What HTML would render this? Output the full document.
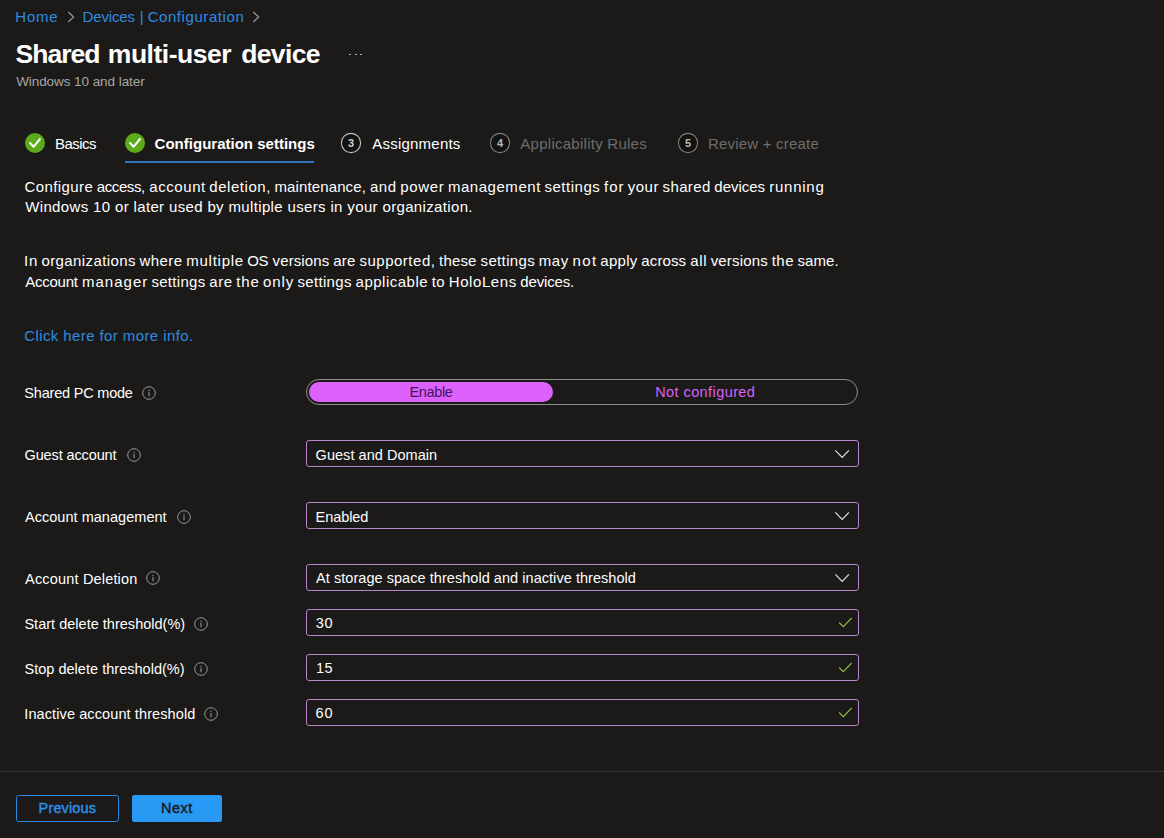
<!DOCTYPE html>
<html><head><meta charset="utf-8"><title>Shared multi-user device</title>
<style>
html,body{margin:0;padding:0;background:#1b1a19;}
body{width:1164px;height:838px;position:relative;overflow:hidden;font-family:"Liberation Sans",sans-serif;}
.t{position:absolute;white-space:nowrap;line-height:1;}
.a{position:absolute;}
.box{position:absolute;left:306px;width:553px;height:27px;box-sizing:border-box;border:1.2px solid #b985c9;border-radius:3px;background:#1b1a19;}
</style></head><body>
<svg class="a" style="left:65.5px;top:9.9px" width="11" height="14" viewBox="0 0 11 14"><polyline points="2.3,2 7.6,7 2.3,12" fill="none" stroke="#969593" stroke-width="1.25"/></svg>
<svg class="a" style="left:250.5px;top:9.9px" width="11" height="14" viewBox="0 0 11 14"><polyline points="2.3,2 7.6,7 2.3,12" fill="none" stroke="#969593" stroke-width="1.25"/></svg>
<div class="a" style="left:349.4px;top:53.8px;width:1.7px;height:1.7px;background:#c4c3c1;border-radius:0.6px"></div>
<div class="a" style="left:354.9px;top:53.8px;width:1.7px;height:1.7px;background:#c4c3c1;border-radius:0.6px"></div>
<div class="a" style="left:360.3px;top:53.8px;width:1.7px;height:1.7px;background:#c4c3c1;border-radius:0.6px"></div>
<svg class="a" style="left:24.0px;top:131.6px" width="22" height="22" viewBox="0 0 22 22"><circle cx="11" cy="11" r="10" fill="#5cab1b"/><polyline points="5.5,10.4 9.6,14.8 16.4,6.5" fill="none" stroke="#fff" stroke-width="2" stroke-linecap="butt" stroke-linejoin="miter"/></svg>
<svg class="a" style="left:124.0px;top:131.6px" width="22" height="22" viewBox="0 0 22 22"><circle cx="11" cy="11" r="10" fill="#5cab1b"/><polyline points="5.5,10.4 9.6,14.8 16.4,6.5" fill="none" stroke="#fff" stroke-width="2" stroke-linecap="butt" stroke-linejoin="miter"/></svg>
<svg class="a" style="left:340.1px;top:131.8px" width="22" height="22" viewBox="0 0 22 22"><circle cx="11" cy="11" r="9.6" fill="#121211" stroke="#c2c1bf" stroke-width="1.1"/><text x="11" y="14.8" text-anchor="middle" font-family="Liberation Sans, sans-serif" font-weight="700" font-size="11" fill="#d2d1cf">3</text></svg>
<svg class="a" style="left:489.1px;top:131.8px" width="22" height="22" viewBox="0 0 22 22"><circle cx="11" cy="11" r="9.6" fill="#121211" stroke="#7f7e7c" stroke-width="1.1"/><text x="11" y="14.8" text-anchor="middle" font-family="Liberation Sans, sans-serif" font-weight="700" font-size="11" fill="#bab9b7">4</text></svg>
<svg class="a" style="left:677.0px;top:131.8px" width="22" height="22" viewBox="0 0 22 22"><circle cx="11" cy="11" r="9.6" fill="#121211" stroke="#7f7e7c" stroke-width="1.1"/><text x="11" y="14.8" text-anchor="middle" font-family="Liberation Sans, sans-serif" font-weight="700" font-size="11" fill="#bab9b7">5</text></svg>
<div class="a" style="left:124.8px;top:160.6px;width:189.4px;height:2px;background:#2d76ba"></div>
<svg class="a" style="left:140.9px;top:384.8px" width="16" height="16" viewBox="0 0 16 16"><circle cx="8" cy="8" r="6.3" fill="none" stroke="#999896" stroke-width="1"/><rect x="7.5" y="6.8" width="1" height="4.4" fill="#9d9c9a"/><rect x="7.45" y="4.8" width="1.1" height="1.1" fill="#9d9c9a"/></svg>
<svg class="a" style="left:125.7px;top:446.7px" width="16" height="16" viewBox="0 0 16 16"><circle cx="8" cy="8" r="6.3" fill="none" stroke="#999896" stroke-width="1"/><rect x="7.5" y="6.8" width="1" height="4.4" fill="#9d9c9a"/><rect x="7.45" y="4.8" width="1.1" height="1.1" fill="#9d9c9a"/></svg>
<svg class="a" style="left:175.5px;top:508.8px" width="16" height="16" viewBox="0 0 16 16"><circle cx="8" cy="8" r="6.3" fill="none" stroke="#999896" stroke-width="1"/><rect x="7.5" y="6.8" width="1" height="4.4" fill="#9d9c9a"/><rect x="7.45" y="4.8" width="1.1" height="1.1" fill="#9d9c9a"/></svg>
<svg class="a" style="left:144.8px;top:569.9px" width="16" height="16" viewBox="0 0 16 16"><circle cx="8" cy="8" r="6.3" fill="none" stroke="#999896" stroke-width="1"/><rect x="7.5" y="6.8" width="1" height="4.4" fill="#9d9c9a"/><rect x="7.45" y="4.8" width="1.1" height="1.1" fill="#9d9c9a"/></svg>
<svg class="a" style="left:192.9px;top:616.0px" width="16" height="16" viewBox="0 0 16 16"><circle cx="8" cy="8" r="6.3" fill="none" stroke="#999896" stroke-width="1"/><rect x="7.5" y="6.8" width="1" height="4.4" fill="#9d9c9a"/><rect x="7.45" y="4.8" width="1.1" height="1.1" fill="#9d9c9a"/></svg>
<svg class="a" style="left:192.9px;top:661.2px" width="16" height="16" viewBox="0 0 16 16"><circle cx="8" cy="8" r="6.3" fill="none" stroke="#999896" stroke-width="1"/><rect x="7.5" y="6.8" width="1" height="4.4" fill="#9d9c9a"/><rect x="7.45" y="4.8" width="1.1" height="1.1" fill="#9d9c9a"/></svg>
<svg class="a" style="left:202.9px;top:706.3px" width="16" height="16" viewBox="0 0 16 16"><circle cx="8" cy="8" r="6.3" fill="none" stroke="#999896" stroke-width="1"/><rect x="7.5" y="6.8" width="1" height="4.4" fill="#9d9c9a"/><rect x="7.45" y="4.8" width="1.1" height="1.1" fill="#9d9c9a"/></svg>
<div class="a" style="left:306px;top:379px;width:552px;height:26px;box-sizing:border-box;border:1px solid #8e8d8b;border-radius:13px"></div>
<div class="a" style="left:308.5px;top:381.5px;width:244px;height:20.7px;background:#dc60fc;border-radius:10.4px"></div>
<div class="box" style="top:440px"></div>
<div class="box" style="top:502px"></div>
<div class="box" style="top:564px"></div>
<div class="box" style="top:609px"></div>
<div class="box" style="top:654px"></div>
<div class="box" style="top:699px"></div>
<svg class="a" style="left:833.0px;top:448.4px" width="18" height="12" viewBox="0 0 18 12"><polyline points="2.3,2.3 9.2,9.4 15.9,2.3" fill="none" stroke="#e2e2e2" stroke-width="1.2"/></svg>
<svg class="a" style="left:833.0px;top:510.4px" width="18" height="12" viewBox="0 0 18 12"><polyline points="2.3,2.3 9.2,9.4 15.9,2.3" fill="none" stroke="#e2e2e2" stroke-width="1.2"/></svg>
<svg class="a" style="left:833.0px;top:572.4px" width="18" height="12" viewBox="0 0 18 12"><polyline points="2.3,2.3 9.2,9.4 15.9,2.3" fill="none" stroke="#e2e2e2" stroke-width="1.2"/></svg>
<svg class="a" style="left:837.0px;top:616.0px" width="18" height="14" viewBox="0 0 18 14"><polyline points="2.1,6.5 6.3,10.6 14.7,2" fill="none" stroke="#8dba3a" stroke-width="1.15"/></svg>
<svg class="a" style="left:837.0px;top:661.0px" width="18" height="14" viewBox="0 0 18 14"><polyline points="2.1,6.5 6.3,10.6 14.7,2" fill="none" stroke="#8dba3a" stroke-width="1.15"/></svg>
<svg class="a" style="left:837.0px;top:706.0px" width="18" height="14" viewBox="0 0 18 14"><polyline points="2.1,6.5 6.3,10.6 14.7,2" fill="none" stroke="#8dba3a" stroke-width="1.15"/></svg>
<div class="a" style="left:0;top:771px;width:1164px;height:1px;background:#363534"></div>
<div class="a" style="left:16px;top:795px;width:103px;height:27px;box-sizing:border-box;border:1px solid #2b8ae0;border-radius:2.5px"></div>
<div class="a" style="left:132px;top:795px;width:90.3px;height:27px;background:#2899f5;border-radius:2.5px"></div>
<span class="t" style="left:15.37px;top:9px;font-size:15px;font-weight:400;color:#2c8ce0;letter-spacing:0.760px;">Home</span>
<span class="t" style="left:82.57px;top:9px;font-size:15px;font-weight:400;color:#2c8ce0;letter-spacing:-0.164px;">Devices</span>
<span class="t" style="left:139.86px;top:9px;font-size:15px;font-weight:400;color:#2c8ce0;letter-spacing:0.000px;">|</span>
<span class="t" style="left:147.64px;top:9px;font-size:15px;font-weight:400;color:#2c8ce0;letter-spacing:0.575px;">Configuration</span>
<span class="t" style="left:15.54px;top:41px;font-size:26.5px;font-weight:700;color:#ffffff;letter-spacing:-0.967px;">Shared</span>
<span class="t" style="left:107.85px;top:41px;font-size:26.5px;font-weight:700;color:#ffffff;letter-spacing:-0.485px;">multi-user</span>
<span class="t" style="left:241.21px;top:41px;font-size:26.5px;font-weight:700;color:#ffffff;letter-spacing:-0.645px;">device</span>
<span class="t" style="left:16.14px;top:75px;font-size:13.5px;font-weight:400;color:#a8a7a5;letter-spacing:-0.066px;">Windows 10 and later</span>
<span class="t" style="left:55.07px;top:136px;font-size:15px;font-weight:400;color:#ffffff;letter-spacing:-0.543px;">Basics</span>
<span class="t" style="left:154.58px;top:136px;font-size:15px;font-weight:700;color:#ffffff;letter-spacing:0.011px;">Configuration settings</span>
<span class="t" style="left:372.27px;top:136px;font-size:15px;font-weight:400;color:#ffffff;letter-spacing:0.220px;">Assignments</span>
<span class="t" style="left:520.37px;top:136px;font-size:15px;font-weight:400;color:#6e6d6b;letter-spacing:0.258px;">Applicability Rules</span>
<span class="t" style="left:707.97px;top:136px;font-size:15px;font-weight:400;color:#6e6d6b;letter-spacing:0.202px;">Review + create</span>
<span class="t" style="left:24.54px;top:179px;font-size:15px;font-weight:400;color:#ffffff;letter-spacing:0.397px;">Configure</span>
<span class="t" style="left:96.86px;top:179px;font-size:15px;font-weight:400;color:#ffffff;letter-spacing:-0.427px;">access,</span>
<span class="t" style="left:149.26px;top:179px;font-size:15px;font-weight:400;color:#ffffff;letter-spacing:0.577px;">account</span>
<span class="t" style="left:209.37px;top:179px;font-size:15px;font-weight:400;color:#ffffff;letter-spacing:0.539px;">deletion,</span>
<span class="t" style="left:274.50px;top:179px;font-size:15px;font-weight:400;color:#ffffff;letter-spacing:0.118px;">maintenance,</span>
<span class="t" style="left:369.96px;top:179px;font-size:15px;font-weight:400;color:#ffffff;letter-spacing:0.520px;">and</span>
<span class="t" style="left:400.13px;top:179px;font-size:15px;font-weight:400;color:#ffffff;letter-spacing:0.703px;">power</span>
<span class="t" style="left:447.90px;top:179px;font-size:15px;font-weight:400;color:#ffffff;letter-spacing:0.546px;">management</span>
<span class="t" style="left:544.48px;top:179px;font-size:15px;font-weight:400;color:#ffffff;letter-spacing:0.529px;">settings</span>
<span class="t" style="left:603.99px;top:179px;font-size:15px;font-weight:400;color:#ffffff;letter-spacing:1.030px;">for</span>
<span class="t" style="left:627.66px;top:179px;font-size:15px;font-weight:400;color:#ffffff;letter-spacing:0.544px;">your</span>
<span class="t" style="left:662.58px;top:179px;font-size:15px;font-weight:400;color:#ffffff;letter-spacing:0.363px;">shared</span>
<span class="t" style="left:714.37px;top:179px;font-size:15px;font-weight:400;color:#ffffff;letter-spacing:-0.021px;">devices</span>
<span class="t" style="left:769.20px;top:179px;font-size:15px;font-weight:400;color:#ffffff;letter-spacing:0.753px;">running</span>
<span class="t" style="left:25.23px;top:199px;font-size:15px;font-weight:400;color:#ffffff;letter-spacing:0.351px;">Windows 10 or later used by multiple users in your organization.</span>
<span class="t" style="left:24.12px;top:253px;font-size:15px;font-weight:400;color:#ffffff;letter-spacing:0.739px;">In</span>
<span class="t" style="left:41.47px;top:253px;font-size:15px;font-weight:400;color:#ffffff;letter-spacing:0.401px;">organizations</span>
<span class="t" style="left:139.62px;top:253px;font-size:15px;font-weight:400;color:#ffffff;letter-spacing:0.406px;">where</span>
<span class="t" style="left:186.20px;top:253px;font-size:15px;font-weight:400;color:#ffffff;letter-spacing:0.757px;">multiple</span>
<span class="t" style="left:247.29px;top:253px;font-size:15px;font-weight:400;color:#ffffff;letter-spacing:-0.528px;">OS</span>
<span class="t" style="left:272.55px;top:253px;font-size:15px;font-weight:400;color:#ffffff;letter-spacing:0.122px;">versions</span>
<span class="t" style="left:333.36px;top:253px;font-size:15px;font-weight:400;color:#ffffff;letter-spacing:0.116px;">are</span>
<span class="t" style="left:359.38px;top:253px;font-size:15px;font-weight:400;color:#ffffff;letter-spacing:0.522px;">supported,</span>
<span class="t" style="left:439.07px;top:253px;font-size:15px;font-weight:400;color:#ffffff;letter-spacing:0.177px;">these</span>
<span class="t" style="left:480.58px;top:253px;font-size:15px;font-weight:400;color:#ffffff;letter-spacing:0.345px;">settings</span>
<span class="t" style="left:538.80px;top:253px;font-size:15px;font-weight:400;color:#ffffff;letter-spacing:0.578px;">may</span>
<span class="t" style="left:572.40px;top:253px;font-size:15px;font-weight:400;color:#ffffff;letter-spacing:1.500px;">not</span>
<span class="t" style="left:600.36px;top:253px;font-size:15px;font-weight:400;color:#ffffff;letter-spacing:0.260px;">apply</span>
<span class="t" style="left:641.36px;top:253px;font-size:15px;font-weight:400;color:#ffffff;letter-spacing:0.102px;">across</span>
<span class="t" style="left:690.16px;top:253px;font-size:15px;font-weight:400;color:#ffffff;letter-spacing:0.685px;">all</span>
<span class="t" style="left:710.65px;top:253px;font-size:15px;font-weight:400;color:#ffffff;letter-spacing:0.166px;">versions</span>
<span class="t" style="left:771.77px;top:253px;font-size:15px;font-weight:400;color:#ffffff;letter-spacing:0.425px;">the</span>
<span class="t" style="left:797.58px;top:253px;font-size:15px;font-weight:400;color:#ffffff;letter-spacing:0.032px;">same.</span>
<span class="t" style="left:25.27px;top:274px;font-size:15px;font-weight:400;color:#ffffff;letter-spacing:-0.262px;">Account</span>
<span class="t" style="left:82.00px;top:274px;font-size:15px;font-weight:400;color:#ffffff;letter-spacing:1.013px;">manager</span>
<span class="t" style="left:151.38px;top:274px;font-size:15px;font-weight:400;color:#ffffff;letter-spacing:0.311px;">settings</span>
<span class="t" style="left:209.36px;top:274px;font-size:15px;font-weight:400;color:#ffffff;letter-spacing:0.561px;">are</span>
<span class="t" style="left:236.27px;top:274px;font-size:15px;font-weight:400;color:#ffffff;letter-spacing:0.919px;">the</span>
<span class="t" style="left:263.07px;top:274px;font-size:15px;font-weight:400;color:#ffffff;letter-spacing:0.894px;">only</span>
<span class="t" style="left:297.38px;top:274px;font-size:15px;font-weight:400;color:#ffffff;letter-spacing:0.340px;">settings</span>
<span class="t" style="left:355.56px;top:274px;font-size:15px;font-weight:400;color:#ffffff;letter-spacing:0.494px;">applicable</span>
<span class="t" style="left:431.67px;top:274px;font-size:15px;font-weight:400;color:#ffffff;letter-spacing:0.481px;">to</span>
<span class="t" style="left:448.77px;top:274px;font-size:15px;font-weight:400;color:#ffffff;letter-spacing:0.573px;">HoloLens</span>
<span class="t" style="left:520.27px;top:274px;font-size:15px;font-weight:400;color:#ffffff;letter-spacing:-0.162px;">devices.</span>
<span class="t" style="left:24.24px;top:328px;font-size:15px;font-weight:400;color:#2c8ce0;letter-spacing:0.404px;">Click here for more info.</span>
<span class="t" style="left:24.34px;top:386px;font-size:14.5px;font-weight:400;color:#ffffff;letter-spacing:-0.202px;">Shared PC mode</span>
<span class="t" style="left:24.47px;top:448px;font-size:14.5px;font-weight:400;color:#ffffff;letter-spacing:-0.114px;">Guest account</span>
<span class="t" style="left:24.97px;top:510px;font-size:14.5px;font-weight:400;color:#ffffff;letter-spacing:0.034px;">Account management</span>
<span class="t" style="left:25.07px;top:572px;font-size:14.5px;font-weight:400;color:#ffffff;letter-spacing:0.176px;">Account Deletion</span>
<span class="t" style="left:24.44px;top:617px;font-size:14.5px;font-weight:400;color:#ffffff;letter-spacing:0.015px;">Start delete threshold(%)</span>
<span class="t" style="left:24.44px;top:662px;font-size:14.5px;font-weight:400;color:#ffffff;letter-spacing:0.025px;">Stop delete threshold(%)</span>
<span class="t" style="left:24.26px;top:707px;font-size:14.5px;font-weight:400;color:#ffffff;letter-spacing:0.104px;">Inactive account threshold</span>
<span class="t" style="left:409.41px;top:385px;font-size:14.5px;font-weight:400;color:#43145a;letter-spacing:-0.345px;">Enable</span>
<span class="t" style="left:655.21px;top:385px;font-size:14.5px;font-weight:400;color:#d862f6;letter-spacing:0.416px;">Not configured</span>
<span class="t" style="left:315.57px;top:448px;font-size:14.5px;font-weight:400;color:#ffffff;letter-spacing:0.044px;">Guest and Domain</span>
<span class="t" style="left:315.61px;top:510px;font-size:14.5px;font-weight:400;color:#ffffff;letter-spacing:-0.066px;">Enabled</span>
<span class="t" style="left:316.07px;top:571px;font-size:14.5px;font-weight:400;color:#ffffff;letter-spacing:0.047px;">At storage space threshold and inactive threshold</span>
<span class="t" style="left:315.75px;top:616px;font-size:14.5px;font-weight:400;color:#ffffff;letter-spacing:0.678px;">30</span>
<span class="t" style="left:315.90px;top:661px;font-size:14.5px;font-weight:400;color:#ffffff;letter-spacing:0.573px;">15</span>
<span class="t" style="left:315.56px;top:706px;font-size:14.5px;font-weight:400;color:#ffffff;letter-spacing:0.862px;">60</span>
<span class="t" style="left:38.61px;top:801px;font-size:14.5px;font-weight:400;color:#2e90e8;letter-spacing:0.142px;-webkit-text-stroke:0.4px #2e90e8;">Previous</span>
<span class="t" style="left:161.01px;top:801px;font-size:14.5px;font-weight:400;color:#1b1a19;letter-spacing:0.489px;-webkit-text-stroke:0.4px #1b1a19;">Next</span>
</body></html>
